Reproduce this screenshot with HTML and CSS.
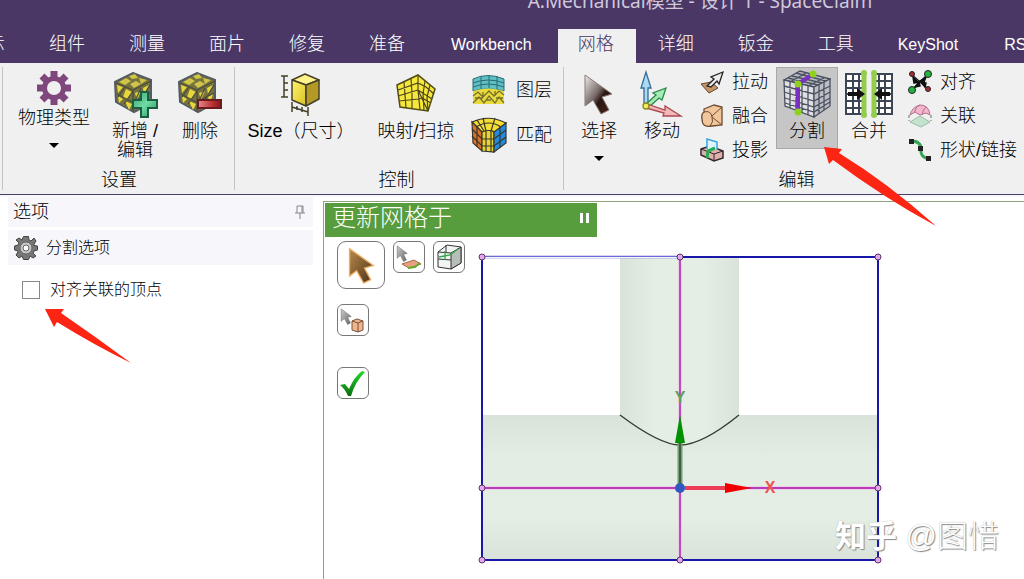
FILE: index.html
```html
<!DOCTYPE html>
<html lang="zh-CN">
<head>
<meta charset="utf-8">
<title>A:Mechanical模型 - 设计 1 - SpaceClaim</title>
<link rel="stylesheet" href="styles.css">
</head>
<body>
<svg class="defs" aria-hidden="true">
  <defs>
    <symbol id="mesh-block" viewBox="0 0 40 42">
      <path d="M2 10L20 1L38 8V31L21 40L3 30Z" fill="#77733a" stroke="#565b62" stroke-width="2"/>
      <g fill="#e6d83c"><path d="M4 13l6 2-5 6zM13 17l6 3-5 8-4-3zM5 24l5 3-4 4zM12 29l7 3-3 6zM22 21l6-2-4 9zM30 16l6-3-5 10zM22 31l7-5-4 12zM31 25l5-3-3 9z"/><path d="M6 10l7-4 5 3-6 4zM16 4l6-2 3 4-6 1zM26 6l8 2-6 4zM17 12l6-3 5 3-7 4z" fill="#cfc54b"/></g>
      <path d="M12 15L5 25M20 19L11 32M28 16L22 29M37 13L26 31M20 18V39M3 11L20 18L38 9M4 22L19 30L37 21" stroke="#4b4d43" stroke-width="1.300" fill="none"/>
    </symbol>
    <symbol id="cursor" viewBox="0 0 30 42">
      <path d="M3 2V33L11 26L19 41L26 37L19 23L28 21Z"/>
    </symbol>
    <symbol id="cursor-wide" viewBox="0 0 30 42">
      <path d="M2 2V33L10 27L18 41L26 37L19 24L29 21Z"/>
    </symbol>
    <linearGradient id="dark" x1="0" x2="1" y2="1"><stop stop-color="#eee"/><stop offset=".45" stop-color="#776a67"/><stop offset=".6" stop-color="#2b1613"/><stop offset="1" stop-color="#4b2618"/></linearGradient>
    <linearGradient id="bronze" x1="0" x2="1" y2="1"><stop stop-color="#b98a4a"/><stop offset="1" stop-color="#4a321b"/></linearGradient>
    <linearGradient id="grey" x1="0" x2="1" y2="1"><stop stop-color="#ccc"/><stop offset="1" stop-color="#666"/></linearGradient>
    <linearGradient id="plus" x2="1" y2="1"><stop stop-color="#3d9d70"/><stop offset=".5" stop-color="#6fdca4"/><stop offset="1" stop-color="#279060"/></linearGradient>
    <linearGradient id="minus" x2="1"><stop stop-color="#e58a8a"/><stop offset=".6" stop-color="#bd3436"/><stop offset="1" stop-color="#8e1519"/></linearGradient>
    <linearGradient id="tick" x2="0" y2="1"><stop stop-color="#26d82b"/><stop offset="1" stop-color="#0a6d12"/></linearGradient>
    <linearGradient id="yellow" x2="1" y2="1"><stop stop-color="#fff36a"/><stop offset="1" stop-color="#d9c024"/></linearGradient>
  </defs>
</svg>

<header class="top">
  <h1 class="title">A:Mechanical模型 - 设计 1 - SpaceClaim</h1>
  <nav class="tabs">
    <button class="tab">显示</button>
    <button class="tab">组件</button>
    <button class="tab">测量</button>
    <button class="tab">面片</button>
    <button class="tab">修复</button>
    <button class="tab">准备</button>
    <button class="tab latin wide">Workbench</button>
    <button class="tab active">网格</button>
    <button class="tab">详细</button>
    <button class="tab">钣金</button>
    <button class="tab">工具</button>
    <button class="tab latin">KeyShot</button>
    <button class="tab latin wide">RSO</button>
  </nav>
</header>

<section class="ribbon">
  <div class="group setup">
    <div class="tools">
      <button class="tool w84">
        <svg class="gear" viewBox="-17 -17 34 34"><g fill="#7f477c"><circle r="12"/><path d="M-3.500 -17H3.500V17H-3.500z"/><path d="M-3.500 -17H3.500V17H-3.500z" transform="rotate(45)"/><path d="M-3.500 -17H3.500V17H-3.500z" transform="rotate(90)"/><path d="M-3.500 -17H3.500V17H-3.500z" transform="rotate(135)"/></g><circle r="7" fill="#f0f0f0"/></svg>
        <span>物理类型</span><i class="caret"></i>
      </button>
      <button class="tool w78">
        <svg class="big" viewBox="0 0 48 48"><use href="#mesh-block" x="2" y="2" width="40" height="42"/><path d="M30 22h7v8h9v8h-9v9h-7v-9h-8v-8h8z" fill="url(#plus)" stroke="#1c5e41" stroke-width="2"/></svg>
        <span>新增 /<br>编辑</span>
      </button>
      <button class="tool w52">
        <svg class="big" viewBox="0 0 48 48"><use href="#mesh-block" x="1" y="2" width="40" height="42"/><path d="M22 30h23v8H22z" fill="url(#minus)" stroke="#6b1c1e" stroke-width="2"/></svg>
        <span>删除</span>
      </button>
    </div>
    <h2 class="label">设置</h2>
  </div>

  <div class="group control">
    <div class="tools">
      <button class="tool w120">
        <svg class="big" viewBox="0 0 48 48"><g stroke="#444029" stroke-width="1.500" stroke-linejoin="round"><path d="M15 10L28 4L42 10L29 15Z" fill="#fff38a"/><path d="M15 10L29 15V36L15 30Z" fill="url(#yellow)"/><path d="M29 15L42 10V29L29 36Z" fill="#b29a25"/><path d="M7 6V27M4 6H11M7 13H11M7 20H11M4 27H11M15 32V42M15 37L31 42M31 37V46M20 36V40M25 37V42" fill="none"/></g></svg>
        <span>Size（尺寸）</span>
      </button>
      <button class="tool w110">
        <svg class="big" viewBox="0 0 48 48"><path d="M5 15L26 5L43 19L36 41L8 37Z" fill="#f7e63c" stroke="#514b16" stroke-width="1.500"/><path d="M26 5L26 20L36 41M26 20L6 26M12 12L14 38M19 9L20 23L20 39M26 20L28 40M6 20L26 13L34 17L42 24M7 31L27 29L30 28L39 33M33 11L31 24L32 40M38 15L35 27L36 41M26 20L40 29" fill="none" stroke="#4d491c" stroke-width="1.200"/></svg>
        <span>映射/扫掠</span>
      </button>
      <div class="stack tall">
        <button class="row"><svg class="mid" viewBox="0 0 36 36"><path d="M2 7Q17 0 33 7V19Q17 15 2 19Z" fill="#5fc0c4" stroke="#276b72"/><path d="M2 11Q17 5 33 11M2 15Q17 9 33 15M10 4V17M18 3V16M26 4V17" fill="none" stroke="#276b72"/><path d="M2 19Q17 14 33 19V32H2Z" fill="#eadb3d"/><path d="M2 24l5-4 5 5 6-6 5 5 5-5 5 4M2 31l6-6 5 6 5-7 6 7 4-6 5 6M4 26h8M15 28h5M25 26h7M12 20v5M24 19v5" fill="none" stroke="#77702b" stroke-width="1.300"/></svg>图层</button>
        <button class="row"><svg class="mid" viewBox="0 0 36 36"><g stroke="#39372c" stroke-width="1.200"><path d="M1 5Q18-3 35 6L25 15Q18 12 11 15Z" fill="#f5df35"/><path d="M1 5L11 15V34L2 26Z" fill="#d9742a"/><path d="M11 15Q18 12 23 15V35L11 34Z" fill="#e9d435"/><path d="M23 15L35 6V26L23 35Z" fill="#218be0"/><path d="M5 10Q18 2 30 10M12 1L15 14V34M24 1L20 14V35M1 12L11 22H23L35 13M1 19L11 29H23L35 20M6 10V30M29 10V31M6 3L13 14" fill="none"/></g></svg>匹配</button>
      </div>
    </div>
    <h2 class="label">控制</h2>
  </div>

  <div class="group edit">
    <div class="tools">
      <button class="tool w60">
        <svg class="big" viewBox="0 0 48 48"><use href="#cursor-wide" x="8" y="3" width="30" height="42" fill="url(#dark)" stroke="#8d7b77"/></svg>
        <span>选择</span><i class="caret"></i>
      </button>
      <button class="tool w66">
        <svg class="big" viewBox="0 0 48 48"><g stroke-width="1.300"><path d="M6 35V18H3L8 2L13 18H10V35Z" fill="#a9d9f5" stroke="#376c98"/><path d="M8 34L18 25L15 23L28 18L24 30L21 28L11 37Z" fill="#a4ecb4" stroke="#26884a"/><path d="M9 34L27 40V36L43 46L25 46L26 43L8 38Z" fill="#f4b6b6" stroke="#a84a52"/><circle cx="8" cy="36" r="3" fill="#f5ed54" stroke="#8b8622"/></g></svg>
        <span>移动</span>
      </button>
      <div class="stack pull">
        <button class="row"><svg class="small" viewBox="0 0 24 24"><path d="M1 14L11 12L18 18L9 23Z" fill="#c4966a" stroke="#664326"/><path d="M7 16L14 9L11 7L23 2L19 14L17 11L11 17Z" fill="#eee" stroke="#222" stroke-width="1.300"/></svg>拉动</button>
        <button class="row"><svg class="small" viewBox="0 0 24 24"><path d="M4 5L14 1L22 3V21L12 22Q2 24 2 15Q1 10 4 8Z" fill="#f2c69b" stroke="#6d4c32" stroke-width="1.300"/><path d="M4 8Q11 6 12 13Q14 18 10 22M12 12L22 3M12 13L22 21" fill="none" stroke="#6d4c32"/></svg>融合</button>
        <button class="row"><svg class="small" viewBox="0 0 24 24"><path d="M1 11L10 8L23 13V20L14 23L1 17Z" fill="#dfb0ac" stroke="#30262b" stroke-width="1.500"/><path d="M1 11L14 16L23 13M14 16V23" fill="none" stroke="#30262b"/><path d="M7 11V1L17 4V12" fill="#dff4ff" stroke="#36a4d9" stroke-width="1.500"/><path d="M7 20L8 13L15 10" fill="none" stroke="#23ad50" stroke-width="3"/></svg>投影</button>
      </div>
      <button class="tool w62 selected">
        <svg class="big" viewBox="0 0 48 48"><g stroke="#4b5260" stroke-width="1.300"><path d="M1 10L17 1L47 9L31 17Z" fill="#b7b9bf"/><path d="M1 10L31 17V47L2 36Z" fill="#e0e0e4"/><path d="M31 17L47 9V36L31 47Z" fill="#bcbec4"/><path d="M7 12V38M13 13V40M19 15V43M25 16V45M36 14V44M41 12V40M1 16L31 24L47 16M1 22L31 31L47 22M2 28L31 37L47 28M2 33L31 42L47 32M5 8L35 15M9 6L39 13M13 3L43 11M7 12L23 3M13 13L29 5M25 16L41 8" fill="none"/></g><path d="M15 42V14L30 4" fill="none" stroke="#7a2fc0" stroke-width="4"/><g fill="#8fd21e"><circle cx="15" cy="14" r="3.500"/><circle cx="30" cy="4" r="3.500"/><circle cx="15" cy="42" r="3.500"/></g></svg>
        <span>分割</span>
      </button>
      <button class="tool w62">
        <svg class="big" viewBox="0 0 48 48"><g fill="#fff" stroke="#3d4654" stroke-width="2"><path d="M1 4H19V44H1ZM29 4H47V44H29Z"/><path d="M8 4V44M14 4V44M34 4V44M40 4V44M1 11H19M1 18H19M1 24H19M1 31H19M1 38H19M29 11H47M29 18H47M29 24H47M29 31H47M29 38H47"/></g><path d="M19 3V45M29 3V45" stroke="#94cc4d" stroke-width="5"/><g fill="#94cc4d"><circle cx="19" cy="3" r="3"/><circle cx="29" cy="3" r="3"/><circle cx="19" cy="45" r="3"/><circle cx="29" cy="45" r="3"/></g><path d="M3 22H12V18L20 24L12 30V26H3ZM45 22H37V18L29 24L37 30V26H45Z" fill="#111"/></svg>
        <span>合并</span>
      </button>
      <div class="stack align">
        <button class="row"><svg class="small" viewBox="0 0 24 24"><path d="M3 4L20 19M4 20L20 4" stroke="#222" stroke-width="1.500"/><path d="M5 7L10 12L6 13ZM12 11L18 7L16 12ZM7 17L11 12L12 16ZM13 12L18 13L17 17Z" fill="#111" stroke="#111" stroke-width="1.500"/><g stroke="#222"><circle cx="4" cy="4" r="2.500" fill="#a92a32"/><circle cx="20" cy="4" r="3.500" fill="#24b43b"/><circle cx="4" cy="20" r="3.500" fill="#24b43b"/><circle cx="20" cy="19" r="2.500" fill="#a92a32"/></g></svg>对齐</button>
        <button class="row"><svg class="small" viewBox="0 0 24 24"><path d="M2 18L12 12L22 18L13 23Z" fill="#c3e3ce" stroke="#9dbdaa"/><path d="M2 11Q4 3 12 1Q21 1 22 11L18 9L12 11L7 8Z" fill="#f4b5ce" stroke="#b36f8c"/><path d="M12 1Q7 3 7 8M18 3Q15 5 14 11" fill="none" stroke="#b36f8c"/><path d="M1 11V17M23 11V17" stroke="#5c7566" stroke-dasharray="3 2"/></svg>关联</button>
        <button class="row"><svg class="small" viewBox="0 0 24 24"><path d="M3 3Q13 3 13 11Q12 20 22 21" fill="none" stroke="#38a555" stroke-width="3"/><path d="M1 1H6V6H1ZM10 8H15V13H10ZM18 18H23V23H18Z" fill="#222"/></svg>形状/链接</button>
      </div>
    </div>
    <h2 class="label">编辑</h2>
  </div>
</section>

<main class="work">
  <aside class="options">
    <div class="panel-head"><h2>选项</h2>
      <button class="pin" aria-label="固定"><svg viewBox="0 0 12 14"><path d="M3 1H9V8M3 1V8M1 8H11M8 1V8M6 8V14" fill="none" stroke="#858590"/></svg></button>
    </div>
    <div class="section-head">
      <svg viewBox="-12 -12 24 24"><g fill="#777" stroke="#444"><path d="M-2.500 -11.500H2.500L3 -8L5 -7L8 -10L10 -7L8 -4L8 -2.500L11.500 -2V2L8 3L7 5L10 8L7 10L4 8L2.500 11.500H-2.500L-4 8L-7 10L-10 7L-8 4L-8 3L-11.500 2V-2L-8 -3L-7 -5L-10 -8L-7 -10L-4 -8Z"/></g><circle r="6" fill="#c9c9c9" stroke="#666"/><circle r="3" fill="#fff" stroke="#666"/></svg>
      <h3>分割选项</h3>
    </div>
    <label class="check"><input type="checkbox"><span>对齐关联的顶点</span></label>
    <svg class="pointer second" viewBox="45 309 86 54"><path d="M45 309L64 309L61 313Q96 337 131 363Q94 345 57 322L54 327Z" fill="#fc2413"/></svg>
  </aside>

  <section class="viewport">
    <div class="status"><span>更新网格于</span><button class="pause" aria-label="暂停"></button></div>
    <div class="palette">
      <div class="palette-row">
        <button class="pick large" aria-label="选择"><svg viewBox="0 0 46 46"><use href="#cursor-wide" x="9" y="5" width="28" height="37" fill="url(#bronze)" stroke="#f0ad62" stroke-width="1.500"/></svg></button>
        <button class="pick" aria-label="选择面"><svg viewBox="0 0 30 30"><use href="#cursor" x="1" y="3" width="14" height="17" fill="url(#grey)" stroke="#555"/><path d="M8 22L20 18L27 22L15 26Z" fill="#e6a27e" stroke="#a76b4b"/><path d="M14 26L21 25L26 21" fill="none" stroke="#5fae2d" stroke-width="2"/></svg></button>
        <button class="pick" aria-label="分割体"><svg viewBox="0 0 30 30"><path d="M4 10L13 3L27 5V21L17 27L4 25Z" fill="#f1f5f2" stroke="#333"/><path d="M17 11L27 5V21L17 27Z" fill="#b7beba" stroke="#333"/><path d="M4 10L17 11M4 17L17 18M12 3V10" fill="none" stroke="#333"/><path d="M11 9V18M5 15L16 13L24 7" fill="none" stroke="#39a64c" stroke-width="1.300"/></svg></button>
      </div>
      <button class="pick" aria-label="选择体"><svg viewBox="0 0 30 30"><use href="#cursor" x="1" y="3" width="14" height="17" fill="url(#grey)" stroke="#555"/><path d="M14 16L19 14L25 16V25L20 27L14 25Z" fill="#efb68d" stroke="#7b5138"/><path d="M14 16L20 18L25 16M20 18V27" fill="none" stroke="#7b5138"/></svg></button>
      <button class="pick" aria-label="完成"><svg viewBox="0 0 30 30"><path d="M2 17L7 16L11 21Q16 9 24 3L27 4Q17 14 13 28L10 28Q7 21 2 17Z" fill="url(#tick)"/></svg></button>
    </div>

    <svg class="model" viewBox="474 249 412 319">
      <defs>
        <linearGradient id="pipe-v" x2="1"><stop stop-color="#dae3da"/><stop offset=".3" stop-color="#e4eee4"/><stop offset=".7" stop-color="#e4eee4"/><stop offset="1" stop-color="#dae3da"/></linearGradient>
        <linearGradient id="pipe-h" x2="0" y2="1"><stop stop-color="#dae3da"/><stop offset=".3" stop-color="#e3ede3"/><stop offset=".7" stop-color="#e4eee4"/><stop offset="1" stop-color="#dae3da"/></linearGradient>
      </defs>
      <path d="M482 415H878V560H482Z" fill="url(#pipe-h)"/>
      <path d="M620 257H739V415Q702 445 680 445Q660 445 620 415Z" fill="url(#pipe-v)"/>
      <path d="M620 415Q660 445 680 445Q702 445 739 415" fill="none" stroke="#2b402b" stroke-width="1.300"/>
      <path d="M680 257V560M482 488H878" stroke="#f0b4ee" stroke-width="3"/>
      <path d="M680 257V560M482 488H878" stroke="#a713a5" stroke-width="1.300"/>
      <path d="M680 257H878V560H482V257" fill="none" stroke="#1717a8" stroke-width="2"/>
      <path d="M482 257H680" stroke="#a9a9e8" stroke-width="3"/><path d="M482 256.500H680" stroke="#6a6ad0"/><path d="M482 257.500H680" stroke="#f3f3ff"/>
      <path d="M680 443V484" stroke="#759a75" stroke-width="5"/><path d="M680 443V484" stroke="#3f633f" stroke-width="2"/>
      <path d="M680 415L685 443H675Z" fill="#009100"/>
      <path d="M685 488H725" stroke="#ee3d55" stroke-width="4"/><path d="M725 483L752 488L725 493Z" fill="#ee0000"/>
      <circle cx="680" cy="488" r="5" fill="#3158bd"/>
      <text class="axis y" x="680" y="403">Y</text><text class="axis x" x="770" y="493">X</text>
      <g fill="#e3a7ec" stroke="#5b3767"><circle cx="482" cy="257" r="3"/><circle cx="680" cy="257" r="3"/><circle cx="878" cy="257" r="3"/><circle cx="482" cy="488" r="3"/><circle cx="878" cy="488" r="3"/><circle cx="482" cy="560" r="3"/><circle cx="680" cy="560" r="3"/><circle cx="878" cy="560" r="3"/></g>
    </svg>
    <p class="watermark"><b>知乎</b> @图惜</p>
  </section>
</main>
<svg class="pointer first" viewBox="824 147 112 79"><path d="M824 147L842 149L839 153Q888 183 936 226Q884 198 833 160L829 164Z" fill="#fc2413"/></svg>
</body>
</html>
```
FILE: styles.css
```css
* { box-sizing: border-box; }
body {
  margin: 0;
  height: 100vh;
  display: flex;
  flex-direction: column;
  position: relative;
  overflow: hidden;
  background: #fff;
  color: #000;
  font: 300 18px/20px "Liberation Sans", "Noto Sans CJK SC", sans-serif;
}
button {
  margin: 0;
  padding: 0;
  border: 0;
  background: none;
  color: inherit;
  font: inherit;
}
h1, h2, h3, p { margin: 0; font: inherit; }
svg { display: block; flex: none; }
.defs { position: absolute; width: 0; height: 0; }

.top { background: #4a3766; color: #fff; overflow: hidden; flex: none; }
.title {
  height: 40px;
  margin-top: -11px;
  padding-left: 376px;
  text-align: center;
  white-space: nowrap;
  color: #cfc8da;
  font: 400 19px/24px "Noto Sans", "Noto Sans CJK SC", sans-serif;
}
.tabs { display: flex; margin-left: -53px; }
.tab { flex: none; height: 34px; padding: 0 22px 4px; white-space: nowrap; }
.latin { font-size: 16px; padding-bottom: 2px; }
.wide { padding-left: 24px; padding-right: 24px; margin-right: 2px; }
.active { background: #f0f0f0; color: #4a3766; padding-left: 20px; }

.ribbon {
  flex: none;
  display: flex;
  padding: 4px 0;
  background: #f0f0f0;
  border-bottom: 1px solid #4a3d68;
  overflow: hidden;
}
.group { display: flex; flex-direction: column; border-right: 1px solid #c4c4c4; }
.setup { border-left: 1px solid #c4c4c4; margin-left: 2px; padding-left: 9px; padding-right: 8px; }
.control { padding-left: 6px; padding-right: 11px; }
.edit { flex: 1 0 auto; padding-left: 5px; border-right: 0; }
.tools { display: flex; align-items: flex-start; height: 103px; }
.label { text-align: center; }
.tool {
  display: flex;
  flex-direction: column;
  align-items: center;
  gap: 4px;
  padding: 2px 0 6px;
  border: 1px solid transparent;
  line-height: 19px;
  white-space: nowrap;
}
.w52 { width: 52px; }
.w60 { width: 60px; }
.w62 { width: 62px; }
.w66 { width: 66px; }
.w78 { width: 78px; }
.w84 { width: 84px; }
.w110 { width: 110px; }
.w120 { width: 120px; }
.selected { background: #c6c6c6; border-color: #a8a8a8; height: 82px; }
.big { width: 48px; height: 48px; }
.gear { width: 34px; height: 34px; margin-top: 1px; }
.mid { width: 36px; height: 36px; }
.small { width: 24px; height: 24px; }
.caret {
  margin-top: 11px;
  border: 5px solid transparent;
  border-top-color: #000;
  border-bottom: 0;
}
.stack { display: flex; flex-direction: column; }
.row { display: flex; align-items: center; gap: 8px; height: 34px; white-space: nowrap; }
.tall .row { height: 45px; gap: 9px; }
.pull { padding: 0 8px 0 5px; }
.align { padding-left: 8px; }
.pull, .align { margin-top: -2px; }

.work { flex: 1; display: flex; min-height: 0; background: #fff; border-top: 2px solid #f8f8fc; }
.options { flex: none; width: 323px; padding: 0 10px 0 8px; position: relative; }
.panel-head, .section-head { display: flex; align-items: center; background: #f6f6fb; }
.panel-head { height: 30px; padding: 0 7px 0 5px; justify-content: space-between; }
.pin svg { width: 12px; height: 14px; }
.section-head { height: 35px; margin-top: 3px; padding-left: 6px; gap: 8px; font-size: 16px; }
.section-head svg { width: 24px; height: 24px; }
.check { display: flex; align-items: center; gap: 10px; margin: 15px 0 0 14px; font-size: 16px; }
.check input {
  appearance: none;
  width: 18px;
  height: 18px;
  margin: 0;
  border: 1px solid #888;
  background: #fff;
}
.pointer { position: absolute; pointer-events: none; }
.second { left: 45px; top: 112px; width: 86px; height: 54px; }
.first { left: 824px; top: 147px; width: 112px; height: 79px; }

.viewport {
  flex: 1;
  position: relative;
  margin-top: 4px;
  border: solid #8fa37b;
  border-width: 1px 0 0 1px;
  overflow: hidden;
}
.status {
  display: flex;
  align-items: center;
  justify-content: space-between;
  width: 272px;
  height: 34px;
  margin: 1px;
  padding: 0 8px 4px 7px;
  background: #579c3d;
  color: #fff;
  font-size: 24px;
}
.pause { width: 9px; height: 10px; border: solid #fff; border-width: 0 3px; }
.palette { display: flex; flex-direction: column; align-items: flex-start; padding: 3px 13px; }
.palette-row { display: flex; align-items: flex-start; gap: 8px; margin-bottom: 15px; }
.pick {
  display: grid;
  place-items: center;
  width: 32px;
  height: 32px;
  border: 1px solid #777;
  border-radius: 6px;
  background: #fff;
}
.pick svg { width: 100%; height: 100%; }
.palette > .pick + .pick { margin-top: 31px; }
.large { width: 48px; height: 48px; border-radius: 9px; }
.model { position: absolute; left: 150px; top: 47px; width: 412px; height: 319px; }
.axis { font: bold 16px "Liberation Sans", sans-serif; text-anchor: middle; }
.y { fill: #5d9f5d; }
.x { fill: #f05050; }
.watermark {
  position: absolute;
  right: 25px;
  bottom: 22px;
  color: #fff;
  font-size: 31px;
  line-height: 40px;
  text-shadow: 1px 1px 1px #888, 0 0 1px #aaa;
}
.watermark b { font-weight: 700; }
```
